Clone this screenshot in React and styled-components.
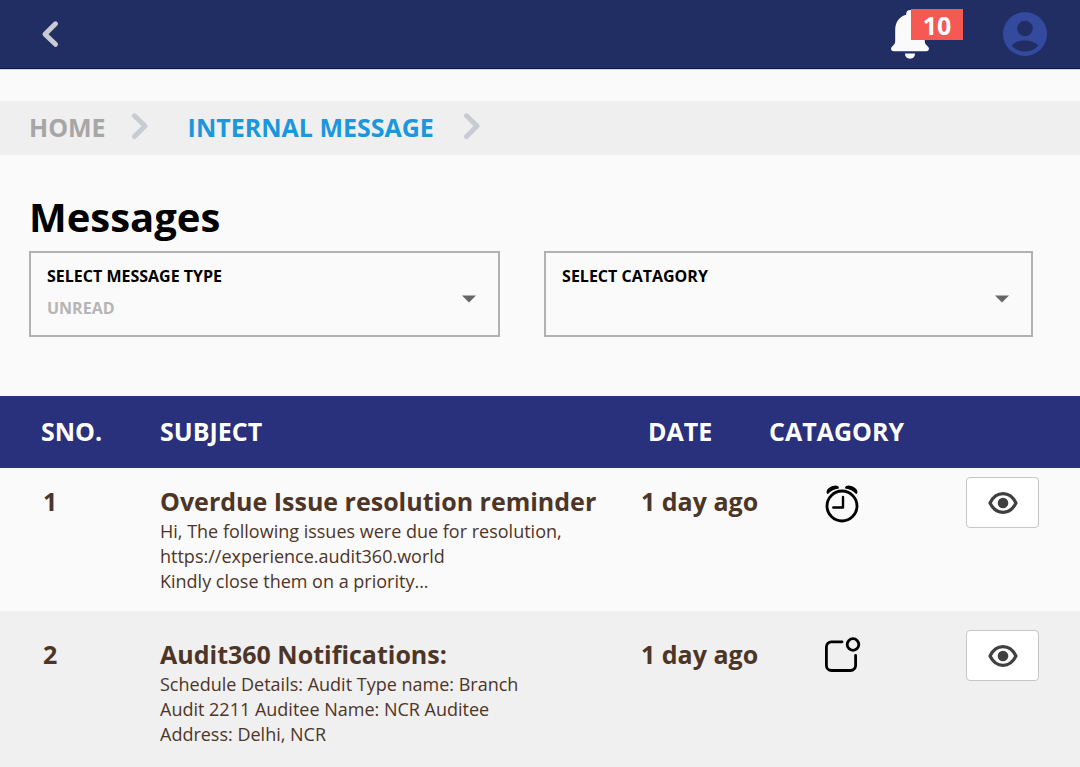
import * as React from 'react';
import styled, { createGlobalStyle, css } from 'styled-components';

const GlobalStyle = createGlobalStyle`
    * {
        box-sizing: border-box;
    }
    body {
        margin: 0;
        background: #fafafa;
        font-family: "Open Sans", "Noto Sans", sans-serif;
        color: #000;
    }
    button, select {
        font-family: inherit;
    }
`

const messages = [
    {
        id: 1,
        subject: 'Overdue Issue resolution reminder',
        lines: ['Hi, The following issues were due for resolution,', 'https://experience.audit360.world', 'Kindly close them on a priority...'],
        date: '1 day ago',
        category: 'reminder'
    },
    {
        id: 2,
        subject: 'Audit360 Notifications:',
        lines: ['Schedule Details: Audit Type name: Branch', 'Audit 2211 Auditee Name: NCR Auditee', 'Address: Delhi, NCR'],
        date: '1 day ago',
        category: 'notification'
    }
];

const TopBar = styled.header`
    display: flex;
    align-items: center;
    height: 68px;
    padding: 0 33px 0 40px;
    background: #212e63;
    box-shadow: 0 1px 1px #10194a;
`
const IconButton = styled.button`
    position: relative;
    display: flex;
    padding: 0;
    border: 0;
    background: none;
    cursor: pointer;
`
const BellButton = styled(IconButton)`
    margin-left: auto;
    margin-right: 74px;
`
const Badge = styled.span`
    position: absolute;
    top: -1px;
    left: 20px;
    width: 52px;
    height: 31px;
    background: #f65954;
    color: #fff;
    font-size: 25px;
    font-weight: 700;
    line-height: 32px;
    text-align: center;
`
const Breadcrumb = styled.nav`
    display: flex;
    align-items: center;
    height: 54px;
    margin-top: 33px;
    padding: 0 29px 2px;
    background: #efefef;
`
const Crumb = styled.a`
    color: ${(props) => props.$active ? '#1c96dc' : '#a6a6a6'};
    font-size: 25px;
    font-weight: 700;
    line-height: 36px;
    text-decoration: none;
`
const Separator = styled.span`
    display: flex;
    margin: 0 ${(props) => props.$last ? 0 : 38}px 2px ${(props) => props.$last ? 28 : 24}px;
`
const Title = styled.h1`
    margin: 36px 29px 0;
    font-size: 40px;
    font-weight: 700;
    line-height: 52px;
`
const Filters = styled.form`
    display: flex;
    gap: 44px;
    margin: 8px 47px 59px 29px;
`
const Field = styled.div`
    position: relative;
    flex: ${(props) => props.$grow} 1 0;
    height: 86px;
    border: 2px solid #b1b1b1;
`
const FieldLabel = styled.label`
    position: absolute;
    top: 11px;
    left: 16px;
    font-size: 16px;
    font-weight: 700;
    line-height: 24px;
    pointer-events: none;
`
const Select = styled.select`
    display: block;
    width: 100%;
    height: 100%;
    padding: 28px 40px 0 16px;
    border: 0;
    background: none;
    appearance: none;
    color: #b5b5b5;
    font-size: 16px;
    font-weight: 700;
`
const Arrow = styled.svg`
    position: absolute;
    top: 42px;
    right: 22px;
    pointer-events: none;
`
const Table = styled.table`
    width: 100%;
    table-layout: fixed;
    border-collapse: collapse;
    text-align: left;
`
const HeadCell = styled.th`
    width: ${(props) => props.$width || 'auto'};
    height: 72px;
    padding: 0 0 2px ${(props) => props.$indent || 0}px;
    background: #2a317c;
    color: #fff;
    font-size: 25px;
    font-weight: 700;
    line-height: 36px;
`
const bold = css`
    font-size: 25px;
    font-weight: 700;
    line-height: 36px;
`
const Cell = styled.td`
    padding: 15px 0 17px ${(props) => props.$indent || 0}px;
    vertical-align: top;
    ${bold}
`
const IconCell = styled(Cell)`
    padding-top: 17px;
    line-height: 0;
`
const ActionCell = styled(Cell)`
    padding-top: 9px;
`
const Row = styled.tr`
    color: #4d3527;
    &:nth-child(even) {
        background: #f0f0f0;
    }
    &:nth-child(even) ${Cell} {
        padding-top: 25px;
        padding-bottom: 20px;
    }
    &:nth-child(even) ${IconCell} {
        padding-top: 26px;
    }
    &:nth-child(even) ${ActionCell} {
        padding-top: 19px;
    }
`
const Subject = styled.h2`
    margin: 0;
    ${bold}
`
const Preview = styled.p`
    margin: 0;
    font-size: 18px;
    font-weight: 400;
    line-height: 25px;
`
const ViewButton = styled.button`
    display: flex;
    align-items: center;
    justify-content: center;
    width: 73px;
    height: 51px;
    padding: 0;
    border: 1px solid #c6c6c6;
    border-radius: 4px;
    background: #fff;
    cursor: pointer;
`

function Chevron({left}){
    return(
        <svg width="20" height="28" viewBox="0 0 20 28" fill="none" stroke="#c9cbd3" strokeWidth="5" strokeLinecap="round" strokeLinejoin="round">
            <path d={left ? 'M15.5 3.8L5 14.3l10.5 10' : 'M4.500 3.800L15 14l-10.500 10.500'} />
        </svg>
    )
}

function BellIcon(){
    return(
        <svg width="38" height="49" viewBox="0 0 38 49" fill="#fafafa">
            <path d="M19 0c-2.200 0-3.800 1.500-3.800 3.800v1C8.500 6.500 4.200 12 4.200 20v11c0 2-.5 3-1.800 4.300L.9 36.800C-.8 38.700.2 41.300 2.600 41.300h32.800c2.400 0 3.400-2.600 1.700-4.500l-1.500-1.500C34.300 34 33.800 33 33.800 31V20c0-8-4.300-13.500-11-15.200v-1C22.800 1.500 21.200 0 19 0z" />
            <path d="M14 43.500h10c0 3.200-2 5.200-5 5.200s-5-2-5-5.200z" />
        </svg>
    )
}

function UserIcon(){
    return(
        <svg width="44" height="44" viewBox="0 0 44 44">
            <circle cx="22" cy="22" r="22" fill="#334a9e" />
            <circle cx="22" cy="16.500" r="7.800" fill="#212e63" />
            <path d="M8.700 33.500C12 30 16.500 28.600 22 28.600s10 1.400 13.300 4.900C32 37.500 27.500 39.500 22 39.500S12 37.500 8.700 33.500z" fill="#212e63" />
        </svg>
    )
}

function ClockIcon(){
    return(
        <svg width="34" height="38" viewBox="0 0 34 38" fill="none" stroke="#000" strokeLinecap="round" strokeLinejoin="round">
            <circle cx="17" cy="21" r="15" strokeWidth="2.800" />
            <path d="M18 12v10.500H8.300" strokeWidth="2.400" />
            <path d="M2.200 7.600C1.600 3.800 8.500-.2 12.600 1.500L13.400 3C9 3.800 5.500 5.500 2.800 8.300zM31.800 7.600C32.400 3.800 25.500-.2 21.400 1.500L20.600 3C25 3.800 28.500 5.500 31.200 8.300z" fill="#000" strokeWidth="1.200" />
        </svg>
    )
}

function NotificationIcon(){
    return(
        <svg width="36" height="36" viewBox="0 0 36 36" fill="none" stroke="#000" strokeWidth="2.800" strokeLinecap="round">
            <path d="M17 4.800H6.400a5 5 0 0 0-5 5v18.700a5 5 0 0 0 5 5h19.200a5 5 0 0 0 5-5V18.500" />
            <circle cx="28" cy="7.500" r="5.800" />
        </svg>
    )
}

function EyeIcon(){
    return(
        <svg width="30" height="22" viewBox="0 0 30 22">
            <path d="M2 11C5 5 9.500 1.700 15 1.700S25 5 28 11c-3 6-7.500 9.300-13 9.300S5 17 2 11z" fill="#fff" stroke="#404040" strokeWidth="3.200" strokeLinejoin="round" />
            <circle cx="15" cy="11" r="5.300" fill="#404040" />
        </svg>
    )
}

function FilterField({id, label, grow, options}){
    return(
        <Field $grow={grow}>
            <FieldLabel htmlFor={id}>{label}</FieldLabel>
            <Select id={id}>
                {options.map(option => <option key={option}>{option}</option>)}
            </Select>
            <Arrow width="14" height="8" viewBox="0 0 14 8">
                <path d="M0 .5h14l-7 7z" fill="#666" />
            </Arrow>
        </Field>
    )
}

export default function App(){
    return(
        <>
            <GlobalStyle />
            <TopBar>
                <IconButton aria-label="Back"><Chevron left /></IconButton>
                <BellButton aria-label="Notifications">
                    <BellIcon />
                    <Badge>10</Badge>
                </BellButton>
                <IconButton aria-label="Account"><UserIcon /></IconButton>
            </TopBar>
            <Breadcrumb>
                <Crumb href="#home">HOME</Crumb>
                <Separator><Chevron /></Separator>
                <Crumb href="#messages" $active>INTERNAL MESSAGE</Crumb>
                <Separator $last><Chevron /></Separator>
            </Breadcrumb>
            <main>
                <Title>Messages</Title>
                <Filters>
                    <FilterField id="type" label="SELECT MESSAGE TYPE" grow={471} options={['UNREAD']} />
                    <FilterField id="category" label="SELECT CATAGORY" grow={489} options={['']} />
                </Filters>
                <Table>
                    <thead>
                        <tr>
                            <HeadCell $width="160px" $indent={41}>SNO.</HeadCell>
                            <HeadCell>SUBJECT</HeadCell>
                            <HeadCell $width="128px" $indent={7}>DATE</HeadCell>
                            <HeadCell $width="197px">CATAGORY</HeadCell>
                            <HeadCell $width="114px" aria-label="View" />
                        </tr>
                    </thead>
                    <tbody>
                        {messages.map(message => (
                            <Row key={message.id}>
                                <Cell $indent={43}>{message.id}</Cell>
                                <Cell>
                                    <Subject>{message.subject}</Subject>
                                    {message.lines.map(line => <Preview key={line}>{line}</Preview>)}
                                </Cell>
                                <Cell>{message.date}</Cell>
                                <IconCell $indent={56}>
                                    {message.category === 'reminder' ? <ClockIcon /> : <NotificationIcon />}
                                </IconCell>
                                <ActionCell>
                                    <ViewButton aria-label="View message"><EyeIcon /></ViewButton>
                                </ActionCell>
                            </Row>
                        ))}
                    </tbody>
                </Table>
            </main>
        </>
    )
}
